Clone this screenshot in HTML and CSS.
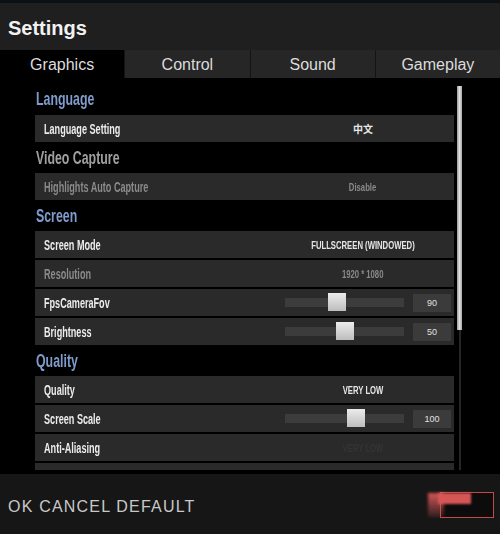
FILE: index.html
```html
<!doctype html>
<html lang="en">
  <head>
    <meta charset="utf-8">
    <title>Settings</title>
    <link rel="stylesheet" href="styles.css">
  </head>
  <body>
    <div class="window">
      <div class="topline"></div>
      <div class="titlebar">Settings</div>
      <div class="tabs">
        <div class="tab active">Graphics</div>
        <div class="tab">Control</div>
        <div class="tab">Sound</div>
        <div class="tab">Gameplay</div>
      </div>

      <div class="content">
        <div class="list">
          <div class="group first"><span>Language</span></div>
          <div class="row">
            <div class="label"><span>Language Setting</span></div>
            <div class="value"><span class="cjk">中文</span></div>
          </div>

          <div class="group off"><span>Video Capture</span></div>
          <div class="row">
            <div class="label off"><span>Highlights Auto Capture</span></div>
            <div class="value off"><span>Disable</span></div>
          </div>

          <div class="group"><span>Screen</span></div>
          <div class="row">
            <div class="label"><span>Screen Mode</span></div>
            <div class="value"><span>FULLSCREEN (WINDOWED)</span></div>
          </div>
          <div class="row">
            <div class="label off"><span>Resolution</span></div>
            <div class="value off"><span>1920 * 1080</span></div>
          </div>
          <div class="row">
            <div class="label"><span>FpsCameraFov</span></div>
            <div class="slider">
              <div class="track"><div class="knob" style="left: 43px"></div></div>
              <div class="num">90</div>
            </div>
          </div>
          <div class="row">
            <div class="label"><span>Brightness</span></div>
            <div class="slider">
              <div class="track"><div class="knob" style="left: 51px"></div></div>
              <div class="num">50</div>
            </div>
          </div>

          <div class="group"><span>Quality</span></div>
          <div class="row">
            <div class="label"><span>Quality</span></div>
            <div class="value"><span>VERY LOW</span></div>
          </div>
          <div class="row">
            <div class="label"><span>Screen Scale</span></div>
            <div class="slider">
              <div class="track"><div class="knob" style="left: 62px"></div></div>
              <div class="num">100</div>
            </div>
          </div>
          <div class="row">
            <div class="label"><span>Anti-Aliasing</span></div>
            <div class="value faint"><span>VERY LOW</span></div>
          </div>
          <div class="row"></div>
        </div>
        <div class="scroll">
          <div class="scroll__thumb"></div>
        </div>
      </div>

      <div class="footer">
        <span class="buttons">OK CANCEL DEFAULT</span>
        <div class="mark"></div>
      </div>
    </div>
  </body>
</html>
```

FILE: styles.css
```css
body{
  margin: 0;
  background: #000;
  font-family: "Liberation Sans", Arial, sans-serif;
}
.window{
  width: 500px;
  height: 534px;
  display: flex;
  flex-direction: column;
  overflow: hidden;
}
.topline{
  height: 3px;
  background: #0b0f16;
}
/*--------------------------*/
.titlebar{
  height: 47px;
  box-sizing: border-box;
  padding: 14px 0 0 8px;
  background: #1f1f1f;
  color: #f2f2f2;
  font-size: 20px;
  font-weight: bold;
}
.tabs{
  display: flex;
  height: 28px;
  background: #1f1f1f;
}
.tab{
  flex: 1;
  display: flex;
  align-items: center;
  justify-content: center;
  padding-top: 1px;
  background: #262626;
  border-left: 1px solid #141414;
  color: #dcdcdc;
  font-size: 16px;
}
.tab.active{
  background: #000;
  border-left: none;
}
/*--------------------------*/
.content{
  display: flex;
  height: 392px;
  background: #000;
}
.list{
  width: 419px;
  margin-left: 35px;
  overflow: hidden;
}
/* the game font is very narrow, squeeze the text */
.group span,
.label span,
.value span{
  display: inline-block;
  white-space: nowrap;
  transform: scaleX(0.65);
  transform-origin: left center;
}
.value span{
  transform: scaleX(0.7);
  transform-origin: center;
}
.value span.cjk{
  transform: none;
  font-family: "Noto Sans CJK SC", sans-serif;
  font-size: 10px;
}
.group{
  height: 29px;
  box-sizing: border-box;
  padding: 3px 0 0 1px;
  color: #7f9ccc;
  font-size: 19px;
  font-weight: bold;
}
.group.first{
  height: 37px;
  padding-top: 10px;
}
.group.off{
  color: #a0a0a0;
}
.row{
  display: flex;
  align-items: center;
  height: 27px;
  margin-bottom: 2px;
  background: #2a2a2a;
}
.label{
  flex: 1;
  padding-left: 9px;
  color: #ececec;
  font-size: 14px;
  font-weight: bold;
}
.value{
  width: 182px;
  text-align: center;
  color: #e6e6e6;
  font-size: 11px;
  font-weight: bold;
}
.off{
  color: #8a8a8a;
}
.faint{
  color: #343434;
}
/*--------------------------*/
.slider{
  display: flex;
  align-items: center;
  width: 182px;
  padding-left: 13px;
  box-sizing: border-box;
}
.track{
  position: relative;
  width: 119px;
  height: 9px;
  background: #3c3c3c;
}
.knob{
  position: absolute;
  top: -5px;
  width: 18px;
  height: 18px;
  background: linear-gradient(#ececec, #bdbdbd);
}
.num{
  width: 38px;
  height: 18px;
  margin-left: 9px;
  background: #3b3b3b;
  color: #e0e0e0;
  font-size: 9px;
  line-height: 18px;
  text-align: center;
}
/*--------------------------*/
.scroll{
  width: 5px;
  margin-left: 3px;
  padding-top: 8px;
  display: flex;
  flex-direction: column;
  align-items: center;
}
.scroll::after{
  content: "";
  flex: 1;
  width: 2px;
  background: #262626;
}
.scroll__thumb{
  width: 5px;
  height: 244px;
  background: linear-gradient(90deg, #9a9a9a, #e0e0e0, #a8a8a8);
}
/*--------------------------*/
.footer{
  position: relative;
  height: 60px;
  margin-top: 4px;
  box-sizing: border-box;
  padding: 24px 0 0 8px;
  background: #161616;
}
.buttons{
  color: #c9c9c9;
  font-size: 16px;
  letter-spacing: 1.2px;
}
/* red logo in the corner */
.mark{
  position: absolute;
  left: 440px;
  top: 18px;
  width: 52px;
  height: 24px;
  border: 1px solid #c94646;
  background: #0c0c0c;
}
.mark::before{
  content: "";
  position: absolute;
  left: -3px;
  top: 0;
  width: 33px;
  height: 11px;
  background: #d65656;
  filter: blur(1px);
}
.mark::after{
  content: "";
  position: absolute;
  left: -13px;
  top: 0;
  width: 16px;
  height: 24px;
  background: linear-gradient(#d65656, rgba(214, 86, 86, 0.15));
  filter: blur(1.5px);
}
```
